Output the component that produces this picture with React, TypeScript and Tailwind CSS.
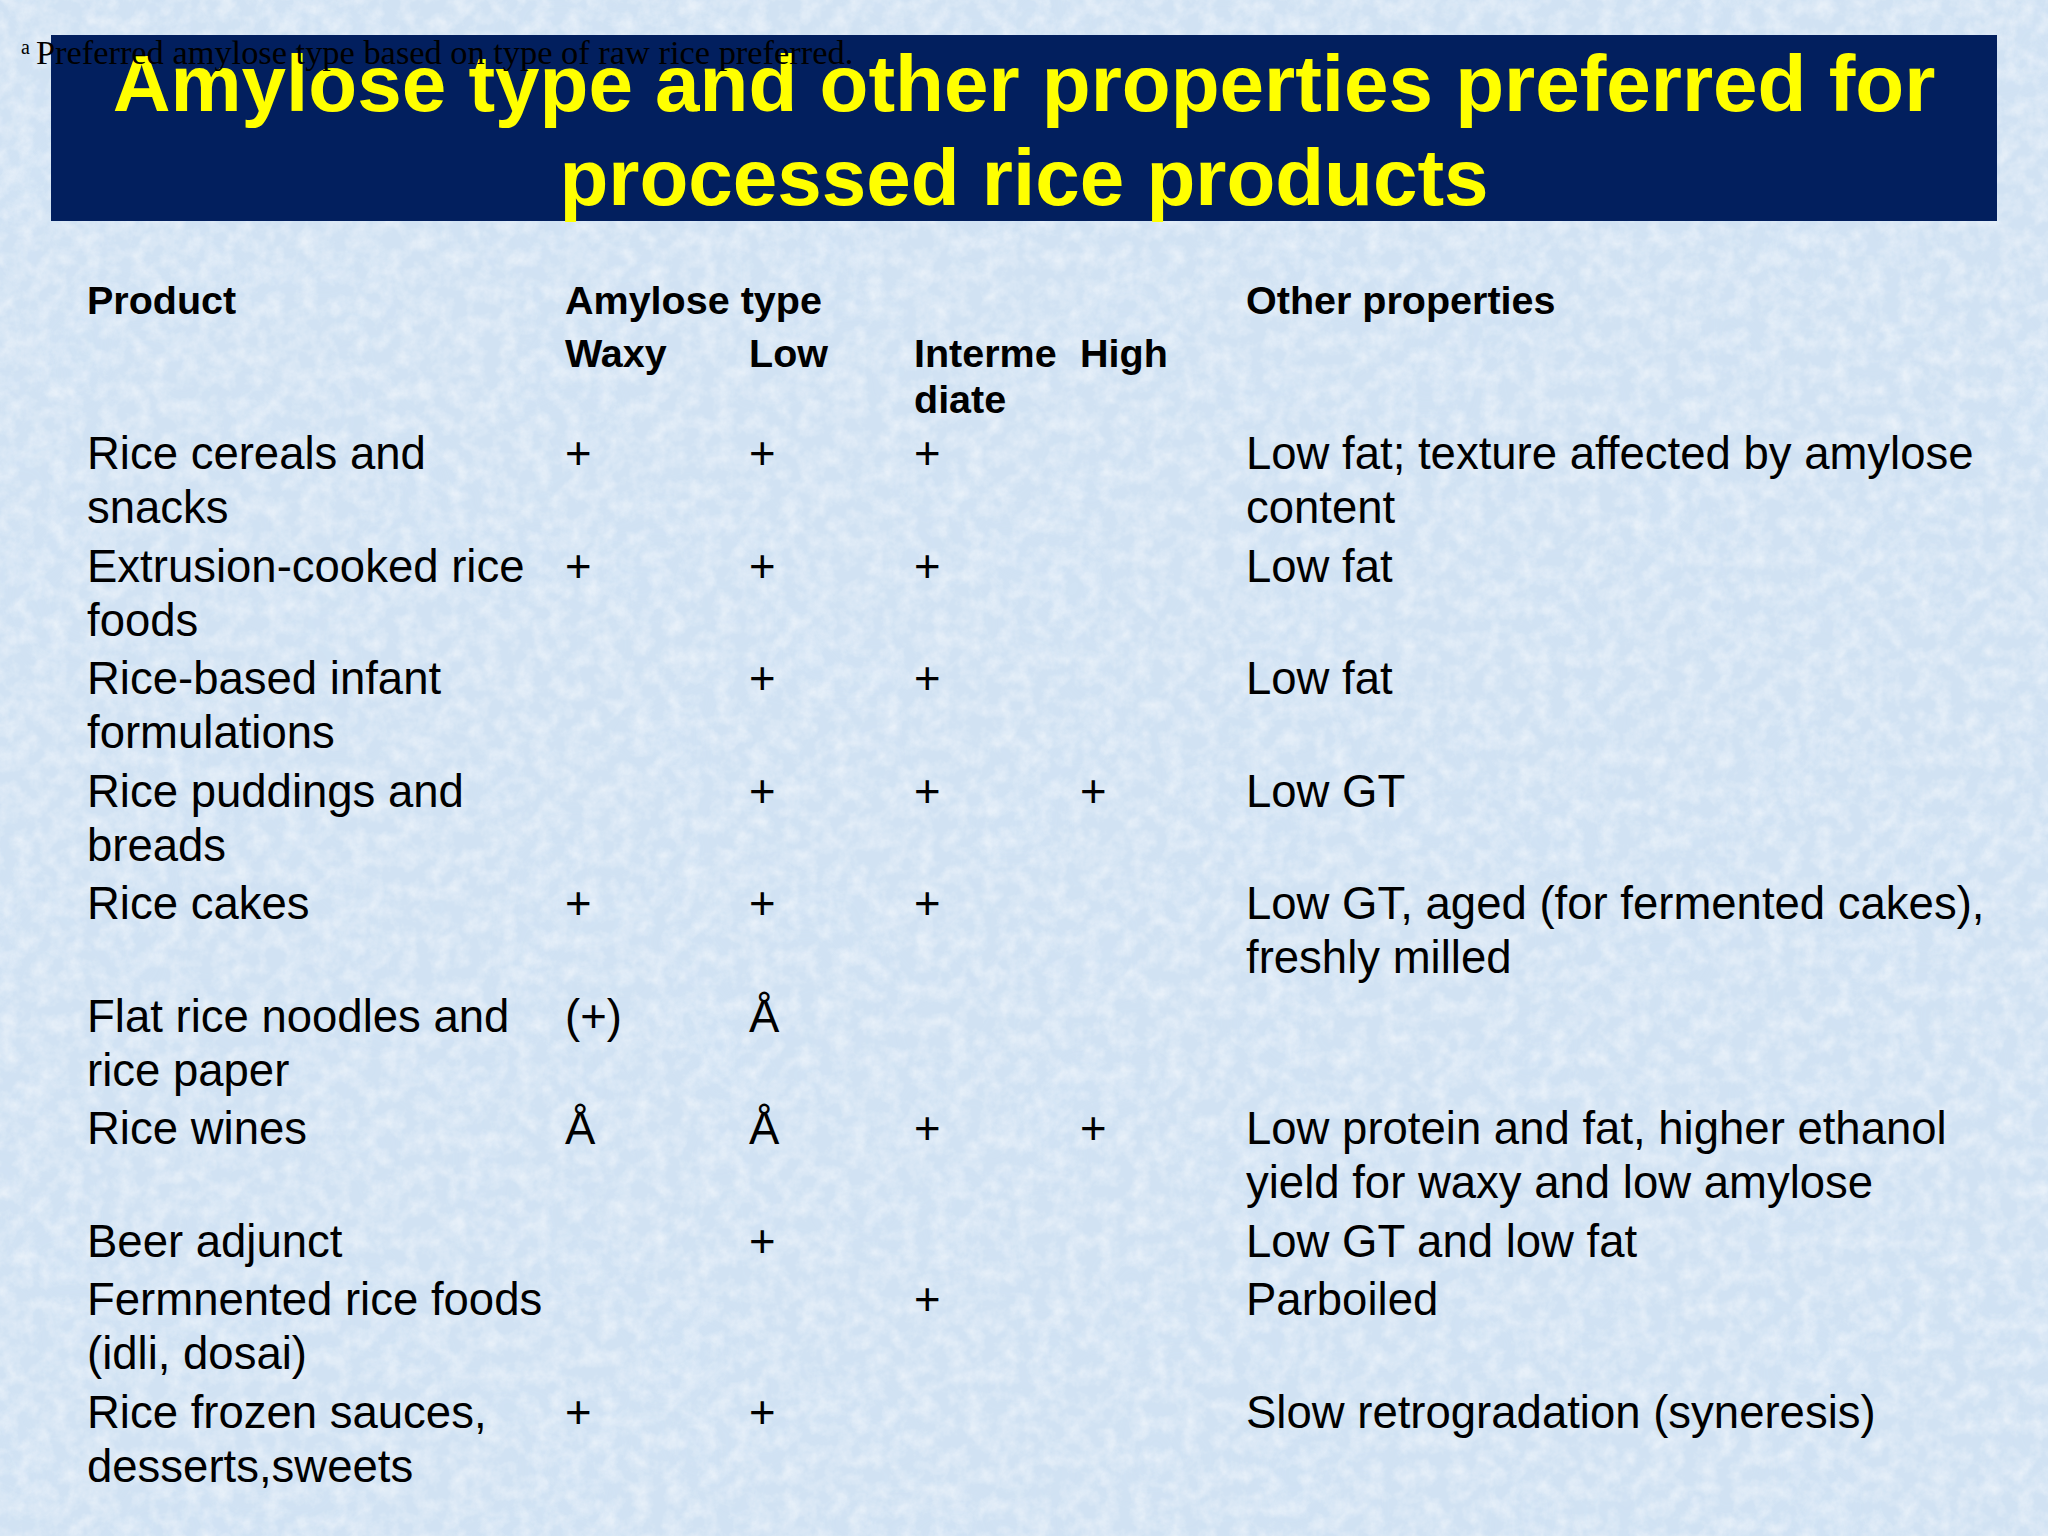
import React from "react";

type Row = {
  product: React.ReactNode;
  waxy?: string;
  low?: string;
  inter?: string;
  high?: string;
  other?: React.ReactNode;
};

const rows: Row[] = [
  { product: <>Rice cereals and<br />snacks</>, waxy: "+", low: "+", inter: "+", other: <>Low fat; texture affected by amylose<br />content</> },
  { product: <>Extrusion-cooked rice<br />foods</>, waxy: "+", low: "+", inter: "+", other: "Low fat" },
  { product: <>Rice-based infant<br />formulations</>, low: "+", inter: "+", other: "Low fat" },
  { product: <>Rice puddings and<br />breads</>, low: "+", inter: "+", high: "+", other: "Low GT" },
  { product: "Rice cakes", waxy: "+", low: "+", inter: "+", other: <>Low GT, aged (for fermented cakes),<br />freshly milled</> },
  { product: <>Flat rice noodles and<br />rice paper</>, waxy: "(+)", low: "Å" },
  { product: "Rice wines", waxy: "Å", low: "Å", inter: "+", high: "+", other: <>Low protein and fat, higher ethanol<br />yield for waxy and low amylose</> },
  { product: "Beer adjunct", low: "+", other: "Low GT and low fat" },
  { product: <>Fermnented rice foods<br />(idli, dosai)</>, inter: "+", other: "Parboiled" },
  { product: <>Rice frozen sauces,<br />desserts,sweets</>, waxy: "+", low: "+", other: "Slow retrogradation (syneresis)" },
];

const cols = "grid grid-cols-[478px_184px_165px_166px_166px_1fr]";

export default function App() {
  return (
    <div className="relative w-[2048px] h-[1536px] overflow-hidden bg-[#d1e2f3] text-black font-['Liberation_Sans',Arial,sans-serif]">
      <svg className="absolute inset-0 w-full h-full" width="2048" height="1536" aria-hidden="true">
        <filter id="tex">
          <feTurbulence type="fractalNoise" baseFrequency="0.06" numOctaves="4" seed="7" />
          <feColorMatrix type="matrix" values="0 0 0 0 1  0 0 0 0 1  0 0 0 0 1  0 0 0 1.8 -0.65" />
        </filter>
        <filter id="tex2">
          <feTurbulence type="fractalNoise" baseFrequency="0.008" numOctaves="2" seed="3" />
          <feColorMatrix type="matrix" values="0 0 0 0 0.62  0 0 0 0 0.78  0 0 0 0 0.95  0 0 0 1.2 -0.5" />
        </filter>
        <rect width="2048" height="1536" filter="url(#tex2)" opacity="0.3" />
        <rect width="2048" height="1536" filter="url(#tex)" opacity="0.5" />
      </svg>

      <div className="relative flex flex-col">
        <div className="ml-[51px] mt-[35px] w-[1946px] h-[186px] bg-[#021f5e] flex flex-col items-center justify-center pt-[5px] text-[#ffff00] font-bold text-[80px] leading-[94px] text-center">
          <div>Amylose type and other properties preferred for</div>
          <div>processed rice products</div>
        </div>

        <div className="ml-[87px] mt-[56px] flex flex-col">
          <div className={`${cols} font-bold text-[39.5px] leading-[46px]`}>
            <div>Product</div>
            <div className="col-span-4">Amylose type</div>
            <div>Other properties</div>
          </div>
          <div className={`${cols} font-bold text-[39.5px] leading-[46px] mt-[7px]`}>
            <div></div>
            <div>Waxy</div>
            <div>Low</div>
            <div>Interme<br />diate</div>
            <div>High</div>
            <div></div>
          </div>
          <div className="flex flex-col gap-[4.5px] mt-[5px]">
            {rows.map((r, i) => (
              <div key={i} className={`${cols} text-[45.5px] leading-[54px]`}>
                <div>{r.product}</div>
                <div>{r.waxy}</div>
                <div>{r.low}</div>
                <div>{r.inter}</div>
                <div>{r.high}</div>
                <div>{r.other}</div>
              </div>
            ))}
          </div>
        </div>
      </div>

      <div className="absolute left-[21px] top-[30px] font-['Liberation_Serif','Times_New_Roman',serif] text-[34.4px] leading-[44px] text-black whitespace-nowrap">
        <sup className="text-[20px] mr-[6px]">a</sup>Preferred amylose type based on type of raw rice preferred.
      </div>
    </div>
  );
}
